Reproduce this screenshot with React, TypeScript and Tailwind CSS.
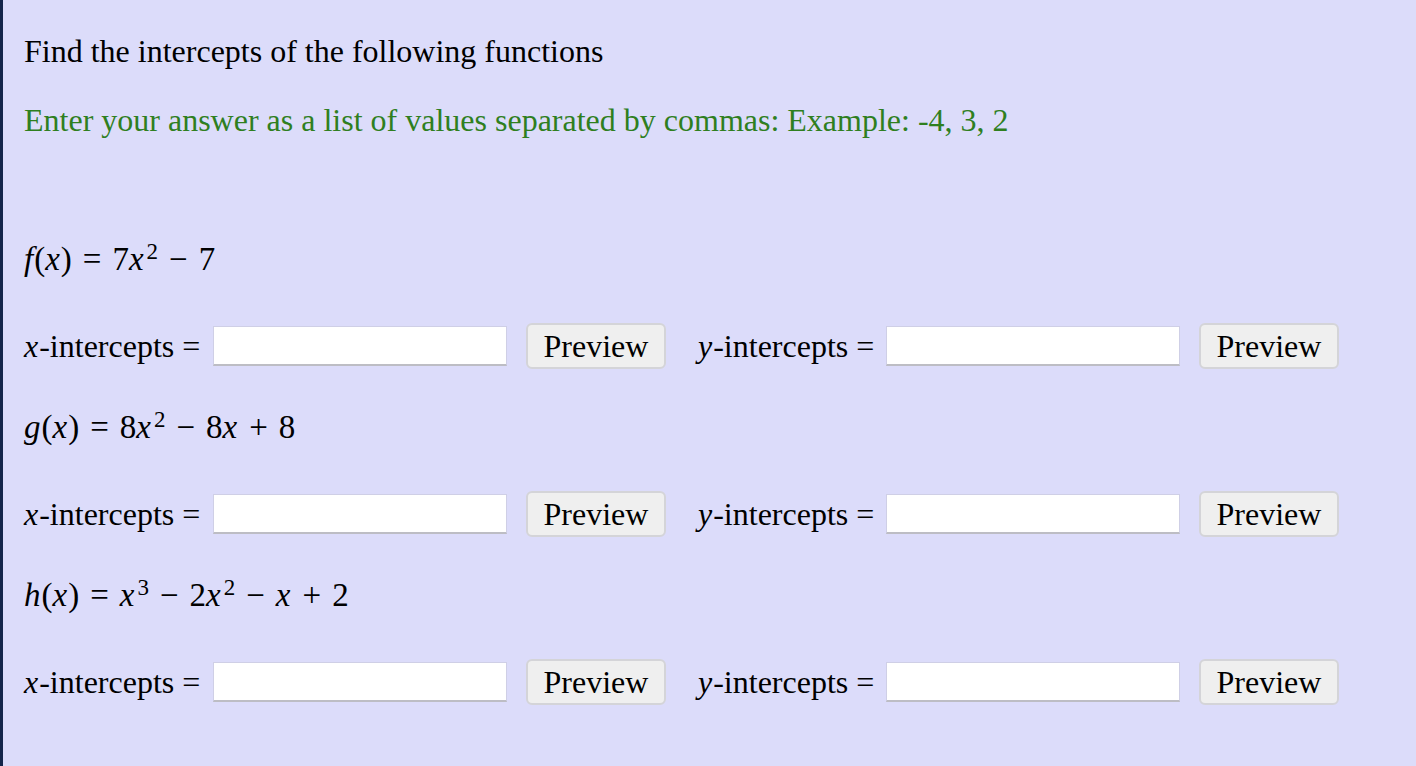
const serif = "font-['Liberation_Serif','Times_New_Roman',serif]";

function V({ children }: { children: React.ReactNode }) {
  return <span className="italic pr-[1px]">{children}</span>;
}

function Sup({ children }: { children: React.ReactNode }) {
  return <span className="relative -top-[11px] ml-[2px] align-baseline text-[23px] leading-none">{children}</span>;
}

// binary operator with math-style spacing
function Op({ children }: { children: React.ReactNode }) {
  return <span className="mx-[11px]">{children}</span>;
}

function AnswerField() {
  return (
    <input
      type="text"
      className="h-[40px] w-[294px] border border-[#cfcfe6] border-b-2 border-b-[#bdbdc4] bg-white outline-none"
    />
  );
}

function PreviewButton() {
  return (
    <button className="h-[46px] w-[140px] rounded-[6px] border-2 border-[#d4d4d8] bg-[#efefef] text-[32px] leading-none text-black">
      Preview
    </button>
  );
}

function AnswerRow() {
  return (
    <div className="mt-[45px] flex h-[46px] items-center">
      <span className="w-[189px] shrink-0">
        <V>x</V>-intercepts =
      </span>
      <AnswerField />
      <div className="ml-[19px]">
        <PreviewButton />
      </div>
      <span className="ml-[32px] w-[188px] shrink-0">
        <V>y</V>-intercepts =
      </span>
      <AnswerField />
      <div className="ml-[19px]">
        <PreviewButton />
      </div>
    </div>
  );
}

export default function App() {
  return (
    <div className={`${serif} min-h-[766px] border-l-[3px] border-[#14254a] bg-[#dcdcfa] pl-[21px] text-[32px] leading-[37px] text-black`}>
      <div className="pt-[33px]">Find the intercepts of the following functions</div>
      <div className="mt-[32px] text-[#2f7f1f]">
        Enter your answer as a list of values separated by commas: Example: -4, 3, 2
      </div>

      <div className="mt-[102px] h-[37px] text-[33px]">
        <V>f</V>(<V>x</V>)<Op>=</Op>7<V>x</V>
        <Sup>2</Sup>
        <Op>−</Op>7
      </div>
      <AnswerRow />

      <div className="mt-[40px] h-[37px] text-[33px]">
        <V>g</V>(<V>x</V>)<Op>=</Op>8<V>x</V>
        <Sup>2</Sup>
        <Op>−</Op>8<V>x</V>
        <Op>+</Op>8
      </div>
      <AnswerRow />

      <div className="mt-[40px] h-[37px] text-[33px]">
        <V>h</V>(<V>x</V>)<Op>=</Op>
        <V>x</V>
        <Sup>3</Sup>
        <Op>−</Op>2<V>x</V>
        <Sup>2</Sup>
        <Op>−</Op>
        <V>x</V>
        <Op>+</Op>2
      </div>
      <AnswerRow />
    </div>
  );
}
